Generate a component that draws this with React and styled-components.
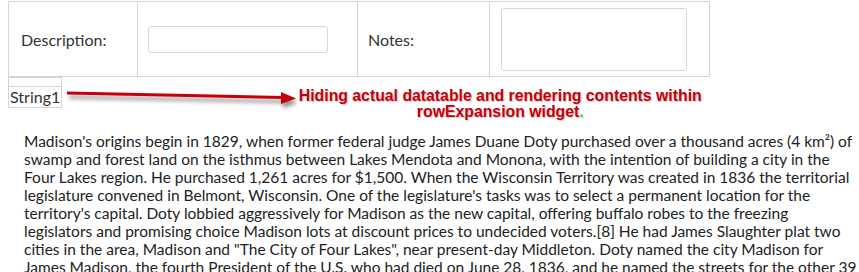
import React from "react";
import styled, { createGlobalStyle } from "styled-components";

const GlobalStyle = createGlobalStyle`
  html, body {
    margin: 0;
    padding: 0;
    background: #fff;
    overflow: hidden;
  }
  body {
    font-family: Lato, "Open Sans", sans-serif;
    color: #333;
  }
`;

const Page = styled.div`
  width: 859px;
  height: 272px;
  padding: 1px 0 0 8px;
  box-sizing: border-box;
  overflow: hidden;
`;

const FormTable = styled.table`
  border-collapse: collapse;
  font-size: 16px;
  color: #333;
`;

const Cell = styled.td`
  border: 1px solid #d4d4d4;
  height: 75px;
  padding: 0 ${(p) => p.$pad || 12}px;
  width: ${(p) => p.$w}px;
  box-sizing: border-box;
  vertical-align: middle;
  text-align: left;
`;

const TextInput = styled.input`
  display: block;
  width: 180px;
  height: 27px;
  box-sizing: border-box;
  border: 1px solid #d6d6d6;
  border-radius: 3px;
  padding: 0 6px;
  margin-left: -2px;
`;

const TextArea = styled.textarea`
  display: block;
  width: 186px;
  height: 63px;
  box-sizing: border-box;
  border: 1px solid #d6d6d6;
  border-radius: 3px;
  resize: none;
  margin-left: -1px;
`;

const SubRow = styled.div`
  display: flex;
  align-items: flex-start;
`;

const MiniTable = styled.table`
  border-collapse: collapse;
  font-size: 16px;
  color: #333;
`;

const MiniHead = styled.th`
  border: 1px solid #d4d4d4;
  height: 8px;
  padding: 0;
`;

const MiniCell = styled.td`
  border: 1px solid #d4d4d4;
  height: 20px;
  padding: 0 1px;
  line-height: 20px;
  font-weight: normal;
`;

const ArrowBox = styled.svg`
  display: block;
  flex: none;
  margin-top: 14px;
`;

const Callout = styled.div`
  width: 406px;
  margin-top: 11px;
  white-space: nowrap;
  text-align: center;
  font-family: "Liberation Sans", Arial, sans-serif;
  font-weight: bold;
  font-size: 15.8px;
  line-height: 16px;
  color: #c4000c;
  text-shadow: 1px 1px 1px rgba(120, 0, 0, 0.25);
`;

const Dot = styled.span`
  color: #5ec25e;
`;

const Article = styled.div`
  margin: 12px 0 0 16px;
  font-size: 15.5px;
  line-height: 18px;
  color: #222;
`;

const Line = styled.div`
  white-space: nowrap;
`;

const lines = [
  "Madison's origins begin in 1829, when former federal judge James Duane Doty purchased over a thousand acres (4\u00a0km\u00b2) of",
  "swamp and forest land on the isthmus between Lakes Mendota and Monona, with the intention of building a city in the",
  "Four Lakes region. He purchased 1,261 acres for $1,500. When the Wisconsin Territory was created in 1836 the territorial",
  "legislature convened in Belmont, Wisconsin. One of the legislature's tasks was to select a permanent location for the",
  "territory's capital. Doty lobbied aggressively for Madison as the new capital, offering buffalo robes to the freezing",
  "legislators and promising choice Madison lots at discount prices to undecided voters.[8] He had James Slaughter plat two",
  'cities in the area, Madison and "The City of Four Lakes", near present-day Middleton. Doty named the city Madison for',
  "James Madison, the fourth President of the U.S. who had died on June 28, 1836, and he named the streets for the other 39",
];

const Arrow = () => (
  <ArrowBox width="235" height="24" viewBox="0 0 235 24">
    <defs>
      <filter id="sh" x="-10%" y="-50%" width="120%" height="250%">
        <feGaussianBlur in="SourceAlpha" stdDeviation="2" />
        <feOffset dx="2" dy="4" result="b" />
        <feComponentTransfer>
          <feFuncA type="linear" slope="0.45" />
        </feComponentTransfer>
        <feMerge>
          <feMergeNode />
          <feMergeNode in="SourceGraphic" />
        </feMerge>
      </filter>
    </defs>
    <g filter="url(#sh)">
      <line x1="5" y1="2" x2="222" y2="6.5" stroke="#c4000c" strokeWidth="3" />
      <polygon points="219,1 234,7.5 219,13" fill="#c4000c" />
    </g>
  </ArrowBox>
);

export default function App() {
  return (
    <>
      <GlobalStyle />
      <Page>
        <FormTable>
          <tbody>
            <tr>
              <Cell $w={129}>Description:</Cell>
              <Cell $w={220}>
                <TextInput type="text" />
              </Cell>
              <Cell $w={132} $pad={10}>
                Notes:
              </Cell>
              <Cell $w={220}>
                <TextArea />
              </Cell>
            </tr>
          </tbody>
        </FormTable>
        <SubRow>
          <MiniTable>
            <thead>
              <tr>
                <MiniHead />
              </tr>
            </thead>
            <tbody>
              <tr>
                <MiniCell>String1</MiniCell>
              </tr>
            </tbody>
          </MiniTable>
          <Arrow />
          <Callout>
            Hiding actual datatable and rendering contents within
            <br />
            rowExpansion widget<Dot>.</Dot>
          </Callout>
        </SubRow>
        <Article>
          {lines.map((l, i) => (
            <Line key={i}>{l}</Line>
          ))}
        </Article>
      </Page>
    </>
  );
}
